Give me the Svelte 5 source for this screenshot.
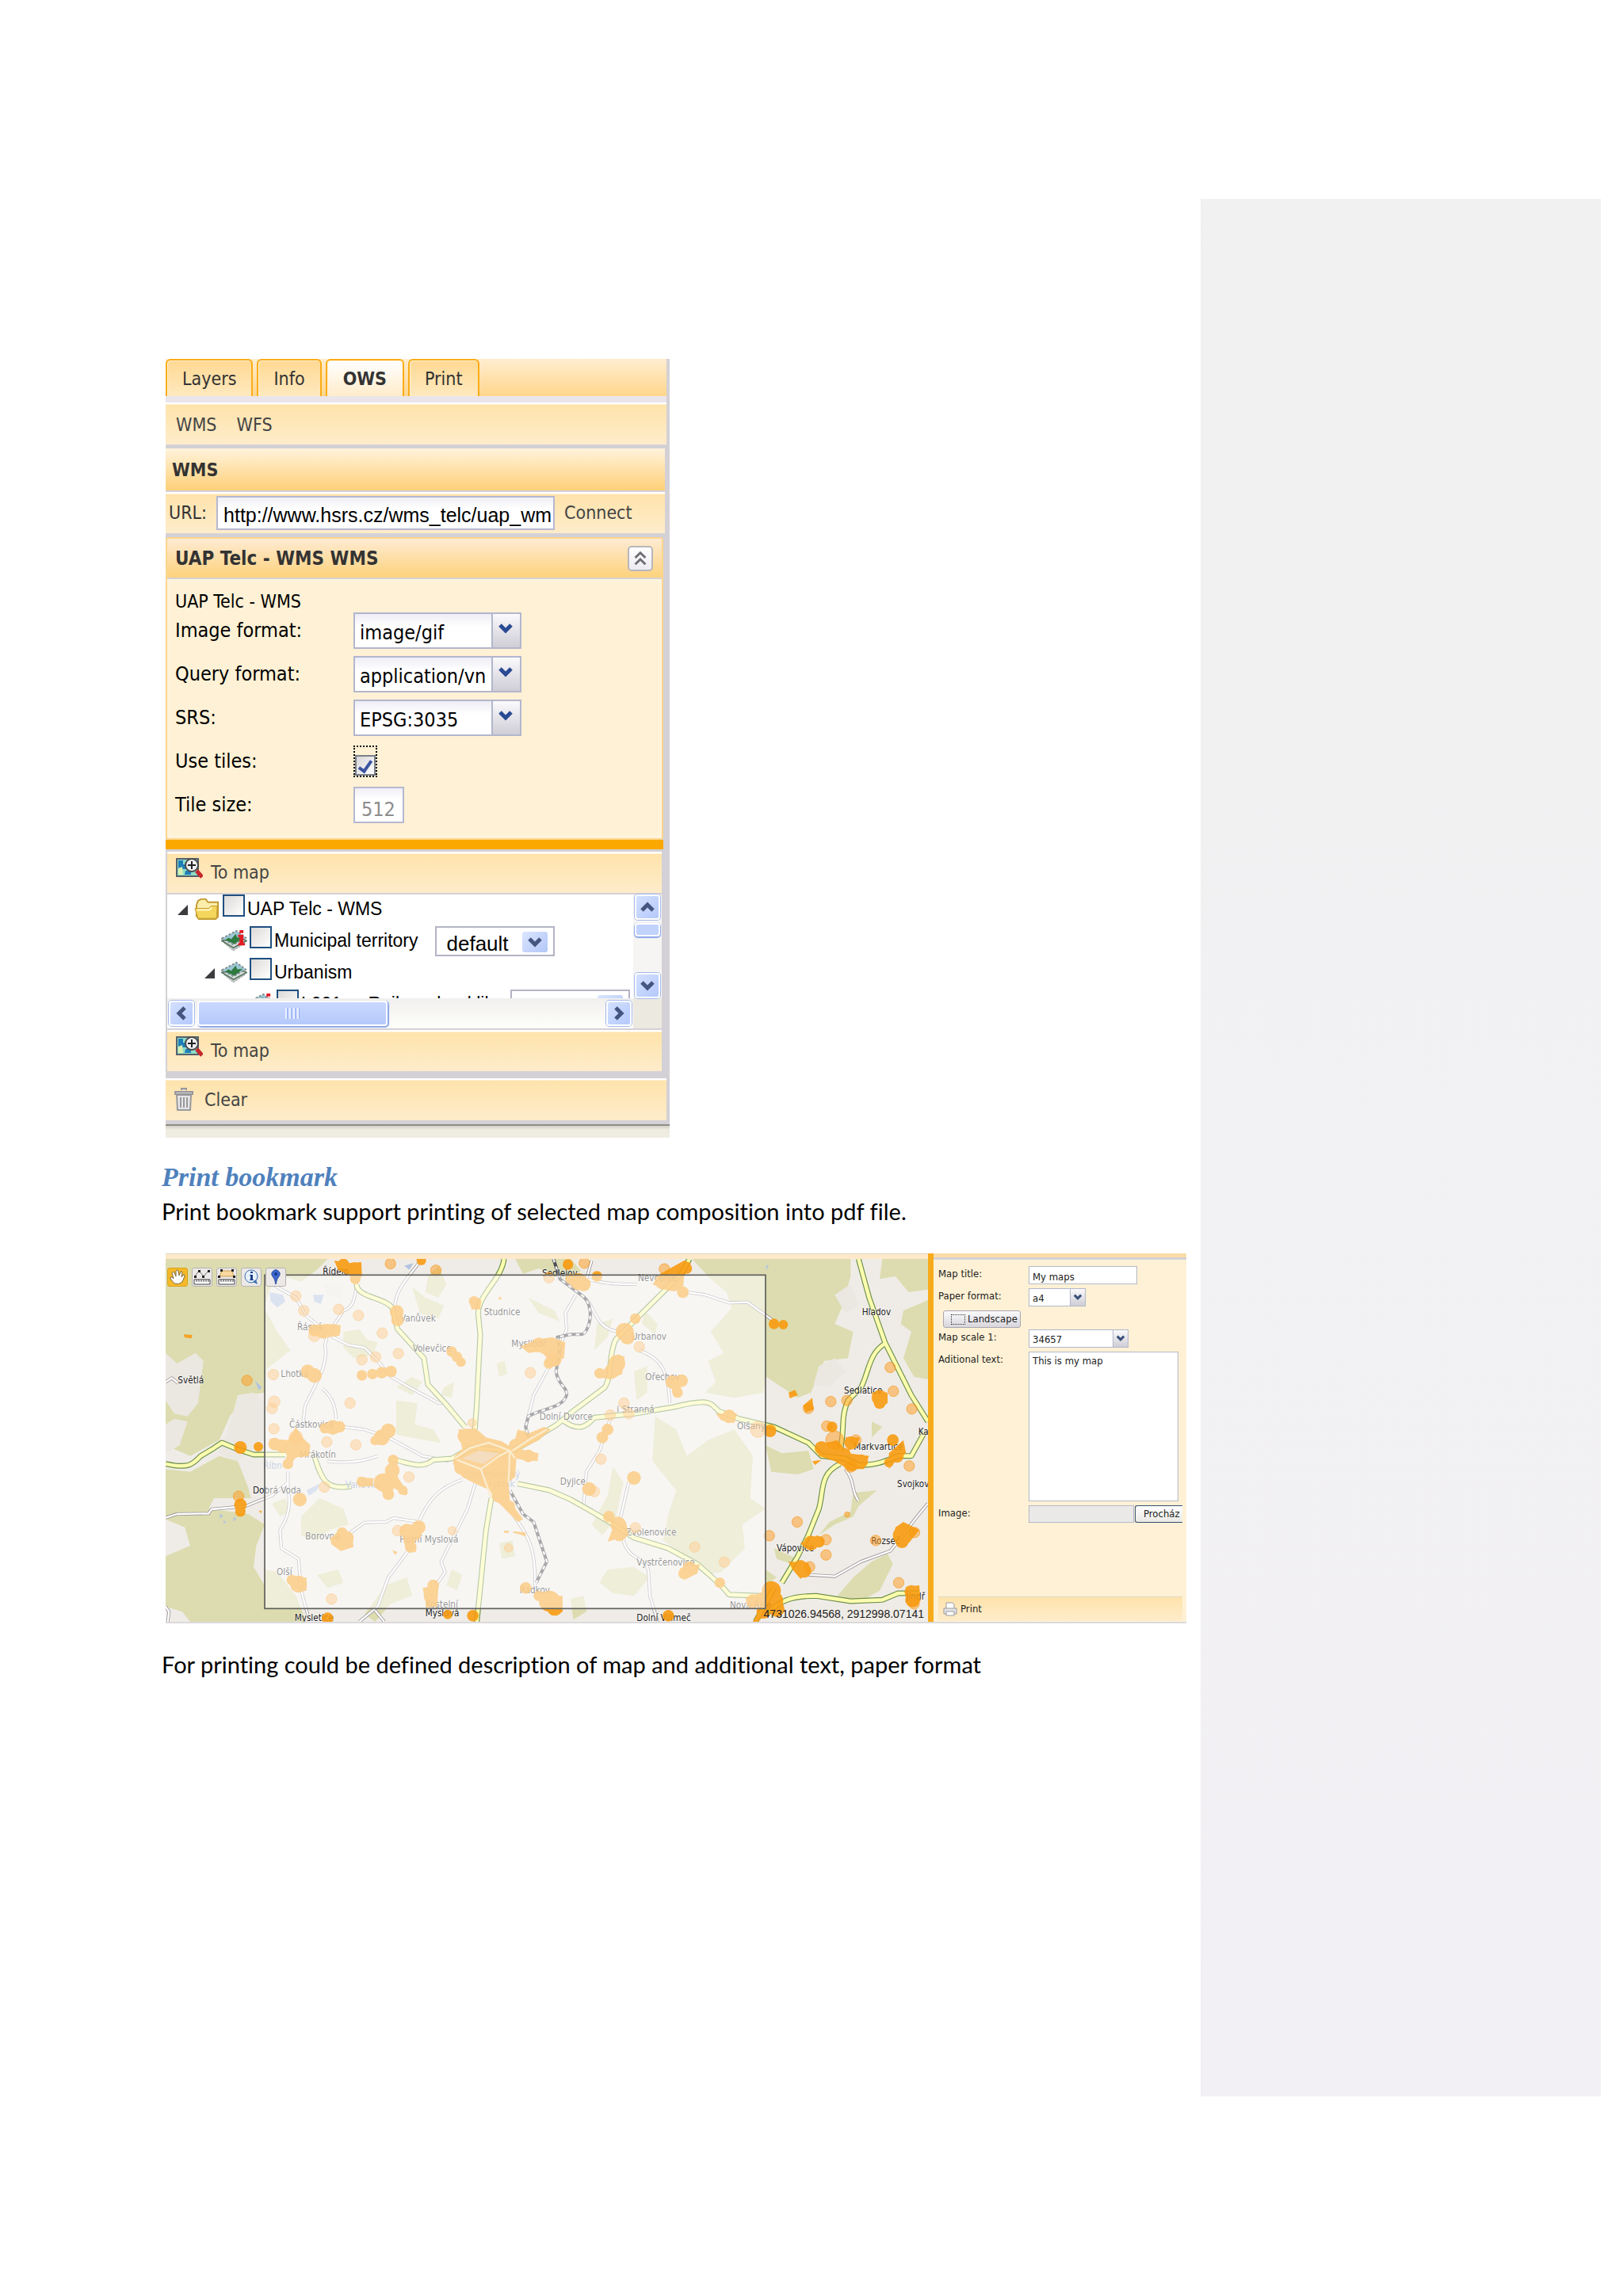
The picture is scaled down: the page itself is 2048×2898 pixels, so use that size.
<script lang="ts">
  type Blob = [number, number, number]

  let url = $state('http://www.hsrs.cz/wms_telc/uap_wm')
  let useTiles = $state(true)
  let mapTitle = $state('My maps')
  let extraText = $state('This is my map')

  const tabs = ['Layers', 'Info', 'OWS', 'Print']
  let activeTab = $state('OWS')

  const formats = [
    { id: 'image-format', label: 'Image format:', value: 'image/gif' },
    { id: 'query-format', label: 'Query format:', value: 'application/vn' },
    { id: 'srs', label: 'SRS:', value: 'EPSG:3035' },
  ]

  const tree = [
    { level: 0, name: 'UAP Telc - WMS', icon: 'folder', open: true, style: false },
    { level: 1, name: 'Municipal territory', icon: 'info', open: false, style: true },
    { level: 1, name: 'Urbanism', icon: 'layer', open: true, style: false },
    { level: 2, name: 'L001a - Railway land lik', icon: 'info', open: false, style: true },
  ]

  const tools = ['Pan', 'Measure line', 'Measure area', 'Info', 'Position']

  const forests = [
    'M27 54H640L600 95 540 140 470 120 420 170 400 240 450 330 500 400 410 470 402 560 330 570 270 650 230 740 120 800 27 760Z',
    'M27 850 120 860 230 800 300 820 340 920 350 960 210 960 190 1000 340 1020 402 1060 370 1140 360 1220 402 1290V1428H120L90 1390 27 1370V1180L120 1140 100 1070 27 1040Z',
    'M402 1230 450 1240 520 1330 560 1428H402Z',
    'M900 590 980 600 970 680 1040 700 1070 750 1010 740 900 720Z',
    'M540 1030 610 960 700 1000 720 1060 650 1080 600 1120 540 1100Z',
    'M1020 120 1060 80 1090 150 1060 200 1010 180Z',
    'M900 540 960 500 1000 520 960 570Z',
    'M860 1290 940 1260 960 1330 880 1360 820 1428 780 1400Z',
    'M700 330 760 320 790 360 830 370 810 420 740 430 700 390Z',
    'M960 160 1010 200 1080 230 1060 280 990 260Z',
    'M1080 540 1120 520 1110 580 1070 570Z',
    'M430 980 480 960 500 1010 460 1030ZM600 1250 680 1230 700 1280 640 1300ZM1280 450 1310 440 1320 490 1290 500Z',
    'M1110 1230 1150 1250 1130 1310 1090 1290ZM1290 1130 1340 1120 1350 1180 1300 1190Z',
    'M1350 54H1560L1600 100 1540 130 1440 90 1380 110Z',
    'M1400 200 1500 250 1520 290 1440 260Z',
    'M1660 300 1720 280 1700 350 1650 400Z',
    'M1800 480 1850 460 1850 560 1810 590ZM1840 250 1890 300 1880 340 1830 300Z',
    'M2020 54H2620V120L2590 230 2560 300 2630 330 2610 430 2520 440 2470 560 2420 580 2300 500 2290 560 2180 580 2070 560 2110 520 2080 440 2140 410 2090 330 2170 240 2150 180 2090 130Z',
    'M1880 650 1960 700 2000 800 2080 740 2180 700 2250 800 2240 960 2298 1000 2210 1060 2220 1150 2130 1240 2070 1250 2000 1180 1910 1120 1930 1020 1960 930 1870 820Z',
    'M1700 950 1720 840 1760 900 1730 1040 1680 1100 1640 1060Z',
    'M1700 1230 1800 1220 1860 1260 1800 1330 1720 1320 1670 1280Z',
    'M1560 1340 1610 1330 1620 1390 1570 1420Z',
    'M2820 250 2913 210V510L2860 500 2820 430 2850 330 2810 300Z',
    'M2740 54H2913V170L2840 180 2790 120 2730 130Z',
    'M2298 760 2360 790 2460 780 2480 850 2420 870 2320 860Z',
    'M2630 1260 2700 1200 2760 1170 2780 1210 2730 1310 2660 1350 2570 1330Z',
    'M2630 940 2720 930 2650 990 2630 1030 2560 1060 2500 1100 2540 1050 2620 1010Z',
    'M2330 1150 2420 1190 2400 1210 2340 1190Z',
    'M2700 670 2740 690 2700 730Z',
    'M2298 1230 2340 1260 2298 1290Z',
  ]

  const clearings = [
    'M27 410 70 450 140 410 170 440 150 600 110 650 60 640 27 590Z',
    'M300 570 360 560 402 600V740L330 800 300 820 230 790 270 680Z',
    'M60 660 110 670 80 760 27 790V680Z',
    'M620 140 700 160 690 200 640 190Z',
    'M2560 190 2620 150 2650 230 2600 260ZM2500 460 2560 430 2600 480 2540 540 2480 530Z',
  ]

  const lakes = [
    'M420 180 470 190 480 215 450 238 425 215Z',
    'M585 190 625 190 615 225 590 215Z',
    'M365 515 392 540 380 552Z',
    'M560 930 610 905 600 930 570 950Z',
    'M232 1018 245 1030 232 1035ZM245 1045 258 1050 248 1056ZM285 1030 295 1040 283 1048Z',
    'M2300 80 2310 75 2300 100Z',
    'M930 80 965 70 950 95Z',
  ]

  const minorRoads = [
    'M750 140C745 220 730 240 700 250L640 340 630 380C640 440 620 480 595 530L555 610 545 690',
    'M430 150 520 200 560 270 660 350 720 380 780 390 830 440 880 500 950 540 1060 600 1085 600',
    'M985 70C940 130 900 170 895 230',
    'M27 1034 70 1020 190 1018 200 1002 330 990 430 950 490 900',
    'M490 860V920C500 980 495 1030 460 1080L465 1150 530 1190 535 1250 545 1330 565 1400',
    'M700 690 780 700 870 730 1000 800 1100 820',
    'M640 820C720 830 780 820 830 800',
    'M620 545C650 570 670 600 672 660',
    'M1150 890C1060 920 1020 970 985 1050L890 1035 860 1050 780 1052 720 1095',
    'M1200 900 1170 1000 1120 1100 1070 1200 1085 1240 1050 1290',
    'M960 1140 870 1260 830 1370 760 1428M820 1385 855 1428',
    'M1480 460 1420 570 1390 690',
    'M1580 190 1540 260 1545 320 1500 440 1480 460',
    'M1600 190C1660 230 1640 310 1740 330',
    'M1640 60 1620 130C1700 150 1740 150 1810 150',
    'M2000 180 2070 190 2160 220 2230 218 2330 290',
    'M1820 400C1900 430 1930 470 1935 600',
    'M1720 630 1670 780 1620 860 1610 980',
    'M1780 900 1750 1030M1760 1120C1780 1200 1850 1180 1855 1240L1860 1330 1890 1428',
    'M1340 1020C1400 1100 1430 1150 1425 1300',
    'M2913 980C2870 1030 2840 1070 2820 1100L2770 1160 2660 1200 2560 1256 2460 1250',
    'M2600 850C2640 900 2620 930 2650 970',
    'M27 520 50 505 75 525',
    'M27 1370 40 1390 35 1428',
  ]

  const mainRoads = [
    'M27 830C120 850 130 830 160 800L210 770 240 750 300 775 360 795H480',
    'M750 150C750 200 860 200 885 240L905 320 1005 430 1020 530 1085 600 1160 690',
    'M1308 54C1300 130 1210 190 1210 260L1218 340 1205 600 1198 700',
    'M590 800C620 900 640 930 730 915',
    'M880 810C950 830 1000 850 1040 815L1110 810 1180 770 1330 780',
    'M1260 960 1240 1080 1230 1180 1205 1428',
    'M2010 54 1980 110 1920 170 1810 280 1730 360C1700 430 1720 490 1690 540L1570 630 1510 680 1380 760 1340 780',
    'M1530 665C1590 710 1620 690 1650 655L1800 640 1950 615C2090 580 2090 600 2120 630L2200 660 2330 690 2460 750 2510 800 2600 810 2650 835C2720 835 2750 820 2800 800L2850 800 2900 710',
    'M2650 54 2690 200 2750 370 2850 570 2913 670',
    'M2750 375C2690 410 2690 480 2660 540L2610 590C2580 660 2600 700 2580 780',
    'M2580 830C2500 870 2520 930 2500 1000L2460 1100 2420 1180 2360 1280',
    'M1360 905 1480 930 1560 965 1640 1010 1740 1070 1800 1110 1930 1150 2040 1210 2130 1290 2160 1325 2280 1330',
    'M2300 1400C2350 1350 2390 1330 2490 1330L2620 1350 2740 1345 2800 1320H2880',
    'M2260 1428 2330 1300',
  ]

  const railway =
    'M1495 54 1520 130 1600 190C1660 230 1630 340 1600 340L1560 340 1510 350 1520 400 1505 480C1510 530 1550 540 1545 570 1530 620 1450 620 1400 650L1390 690 1400 730M1330 930 1380 1020 1420 1050 1450 1140 1470 1200 1430 1280'

  // built-up areas with a ragged outline
  const builtUp = [
    'M665 60 720 70 768 66 770 120 745 150 728 120 680 95Z',
    'M572 305 640 300 690 305 685 345 640 350 580 345Z',
    'M1135 700 1200 695 1240 730 1300 745 1340 770 1360 700 1400 715 1460 690 1485 700 1440 740 1370 775 1438 790 1435 820 1380 815 1355 810 1350 880 1325 900 1330 970 1380 1040 1360 1050 1310 1000 1270 960 1255 930 1200 905 1150 880 1115 830 1120 800 1150 775Z',
    'M420 735 490 740 520 690 545 730 575 760 570 800 520 805 490 850 470 840 490 790 430 775Z',
    'M820 880 870 860 875 800 905 815 905 880 945 940 935 950 890 920 880 965 850 940 815 915Z',
    'M755 880 815 885 810 915 760 915Z',
    'M650 1110 690 1090 735 1105 738 1145 690 1160 655 1135Z',
    'M920 1080 1000 1055 1010 1080 970 1110 975 1165 935 1150Z',
    'M1370 385 1430 360 1490 350 1540 370 1535 430 1500 440 1440 405 1400 410Z',
    'M1870 150 1900 110 1990 60 2015 70 1990 120 1985 170 1930 175Z',
    'M1705 440 1740 415 1765 425 1755 490 1710 510 1655 500 1660 470 1700 475Z',
    'M1400 740 1450 700 1475 705 1430 745Z',
    'M1940 500 1985 500 1975 560 1945 560Z',
    'M1690 1020 1770 1050 1780 1100 1700 1125 1725 1060Z',
    'M1430 1325 1530 1330 1530 1390 1490 1405 1460 1370Z',
    'M2110 640 2190 640 2180 675 2130 665Z',
    'M1975 1225 2050 1210 2040 1245 1990 1270Z',
    'M2220 1340 2300 1310 2300 1280 2345 1285 2350 1350 2375 1390 2310 1385 2270 1428 2250 1428 2280 1370Z',
    'M2490 760 2570 740 2610 790 2690 800 2670 850 2610 850 2560 820 2500 800Z',
    'M2700 560 2760 560 2760 600 2730 620 2705 590Z',
    'M2765 790 2820 740 2830 790 2790 820 2765 850Z',
    'M2385 560 2410 550 2420 570 2390 582Z',
    'M2440 610 2475 580 2480 625 2450 635Z',
    'M2475 820 2510 815 2485 835Z',
    'M2600 730 2655 730 2640 770 2610 780Z',
    'M2385 1200 2460 1205 2470 1240 2430 1265 2400 1230Z',
    'M2430 1130 2495 1100 2505 1140 2450 1150Z',
    'M2790 1070 2820 1050 2880 1080 2840 1130 2800 1145 2780 1110Z',
    'M2830 1295 2880 1290 2885 1350 2840 1365 2830 1330Z',
    'M1000 1300 1060 1290 1055 1370 1015 1375Z',
    'M500 1270 560 1260 560 1310 530 1315Z',
    'M1175 200 1190 215 1205 198 1222 210 1218 245 1185 245Z',
    'M1390 1105 1340 1090 1345 1085 1390 1090ZM885 1155 905 1165 895 1175ZM1308 1083h18v8h-18ZM380 1005l12 5-5 8ZM1290 195l10 10-12 4Z',
    'M95 340 128 342 125 355 100 352Z',
  ]

  // settlement clusters, drawn as overlapping circles
  const clusters: Blob[] = [
    [700, 75, 22], [740, 95, 28], [745, 130, 20], [995, 60, 18], [902, 255, 26], [905, 285, 24],
    [590, 325, 22], [625, 330, 26], [665, 325, 24], [565, 480, 26], [590, 495, 28], [770, 495, 20],
    [810, 490, 20], [845, 485, 22], [880, 480, 22], [1110, 405, 20], [1130, 425, 20], [1145, 445, 18],
    [630, 695, 20], [660, 692, 28], [685, 690, 22], [440, 755, 24], [470, 765, 24], [510, 780, 30],
    [540, 775, 30], [490, 830, 20], [870, 705, 28], [845, 730, 30], [820, 742, 18], [310, 768, 24],
    [378, 765, 18], [310, 985, 24], [310, 1010, 20], [535, 965, 26], [770, 898, 20], [850, 900, 34],
    [885, 855, 28], [888, 815, 20], [880, 895, 30], [925, 930, 18], [870, 945, 22], [690, 1120, 32],
    [715, 1110, 24], [695, 1090, 20], [940, 1085, 28], [965, 1090, 32], [985, 1070, 26], [955, 1145, 22],
    [1030, 1330, 26], [1040, 1290, 22], [1035, 1350, 22], [530, 1285, 32], [505, 1270, 20], [1160, 725, 28],
    [1290, 950, 28], [1330, 990, 20], [1350, 760, 24], [1400, 800, 24], [1380, 725, 20], [1145, 845, 26],
    [1195, 215, 20], [1440, 380, 28], [1490, 400, 34], [1500, 435, 26], [1478, 450, 20], [1590, 140, 32],
    [1560, 130, 20], [1610, 150, 26], [1660, 120, 20], [1550, 75, 20], [1910, 140, 30], [1950, 140, 36],
    [1985, 180, 22], [2000, 90, 20], [1765, 330, 34], [1775, 350, 28], [1805, 280, 20], [1735, 450, 32],
    [1715, 480, 28], [1670, 487, 20], [1945, 520, 26], [1980, 515, 24], [1965, 560, 20], [2160, 650, 26],
    [1700, 700, 22], [1680, 730, 22], [1630, 925, 26], [1800, 883, 26], [1740, 1060, 30], [1745, 1095, 28],
    [1705, 1030, 22], [2010, 1225, 26], [1990, 1245, 22], [2125, 1280, 20], [2250, 1350, 26], [1480, 1350, 40],
    [1500, 1375, 30], [1390, 1300, 22], [1440, 1330, 20], [2320, 1310, 36], [2325, 1350, 40], [2290, 1390, 26],
    [2340, 1380, 30], [1930, 1405, 22], [640, 1415, 22], [1190, 1405, 22], [1095, 1400, 18], [2330, 300, 20],
    [2365, 303, 18], [2730, 580, 30], [2730, 600, 22], [2315, 705, 24], [2590, 800, 32], [2625, 830, 28],
    [2660, 820, 26], [2510, 770, 26], [2540, 770, 22], [2550, 690, 20], [2620, 750, 24], [2780, 740, 22],
    [2795, 800, 26], [2765, 825, 18], [2470, 1130, 28], [2500, 1125, 22], [2430, 1220, 26], [2445, 1235, 26],
    [2810, 1100, 30], [2830, 1080, 22], [2815, 1125, 24], [2850, 1315, 26], [2855, 1345, 28],
  ]

  const dots: Blob[] = [
    [878, 72, 20], [1050, 97, 20], [520, 195, 20], [550, 250, 20], [682, 245, 20], [757, 268, 20],
    [847, 335, 20], [908, 412, 20], [822, 425, 20], [770, 436, 20], [435, 492, 20], [335, 514, 20],
    [438, 595, 22], [430, 620, 20], [725, 600, 20], [437, 697, 20], [637, 747, 20], [747, 758, 20],
    [303, 953, 20], [628, 918, 20], [948, 880, 20], [905, 1083, 20], [655, 1342, 20], [1408, 485, 20],
    [1112, 1083, 16], [1325, 1148, 16], [1187, 675, 16], [590, 345, 22], [520, 730, 26], [1612, 70, 20],
    [1478, 125, 20], [1915, 92, 20], [1820, 387, 20], [1762, 600, 20], [1780, 640, 20], [1710, 645, 20],
    [1675, 812, 20], [1650, 935, 20], [1805, 1072, 20], [2030, 1145, 20], [2142, 1202, 20], [2270, 700, 30],
    [2770, 465, 20], [2545, 594, 20], [2606, 590, 20], [2782, 555, 20], [2852, 622, 20], [2460, 620, 20],
    [2530, 687, 20], [2560, 740, 34], [2640, 740, 20], [2842, 838, 20], [2418, 1050, 20], [2527, 1117, 20],
    [2527, 1175, 20], [2312, 1102, 20], [2465, 1220, 20], [2715, 1120, 20], [2862, 1090, 20], [2802, 1280, 20],
    [2860, 1360, 20], [2620, 840, 22], [1490, 435, 24], [2607, 1022, 10],
  ]

  const places: [number, number, string][] = [
    [622, 115, 'Řídelo'], [1232, 266, 'Studnice'], [915, 292, 'Vanůvek'], [525, 324, 'Řásná'],
    [962, 405, 'Volevčice'], [1336, 387, 'Myslibdř'], [463, 500, 'Lhotka'], [73, 526, 'Světlá'],
    [495, 693, 'Částkovice'], [535, 807, 'Mrákotín'], [357, 943, 'Dobrá Voda'], [556, 1115, 'Borovná'],
    [913, 1127, 'Horní Myslová'], [447, 1251, 'Olší'], [1010, 1374, 'Kostelní'], [1010, 1408, 'Myslová'],
    [515, 1424, 'Mysletice'], [1367, 1319, 'Radkov'], [1452, 119, 'Sedlejov'], [1815, 139, 'Nevcehle'],
    [1790, 360, 'Urbanov'], [1843, 512, 'Ořechov'], [1735, 636, 'i Stranná'], [1442, 664, 'Dolní Dvorce'],
    [2190, 699, 'Olšany'], [1520, 909, 'Dyjice'], [1770, 1101, 'Zvolenovice'], [1810, 1215, 'Vystrčenovice'],
    [2163, 1376, 'Nová Říše'], [1810, 1426, 'Dolní Vilímeč'], [2663, 266, 'Hladov'], [2595, 563, 'Sedlatice'],
    [2632, 778, 'Markvartice'], [2876, 720, 'Ka'], [2796, 917, 'Svojkov'], [2698, 1133, 'Rozseč'],
    [2340, 1160, 'Vápovice'], [2830, 1344, 'Jindř'],
  ]

  const waterNames: [number, number, string][] = [
    [397, 850, 'Říbn'], [707, 920, 'Vanůvka'], [1155, 883, 'Staroměstský'], [1250, 918, 'rybník'],
    [1155, 780, 'Telč'],
  ]
</script>

{#snippet chevron(dir: string, color: string)}
  <svg class="chevron {dir}" viewBox="0 0 20 20" aria-hidden="true">
    <path d="M3 6 10 13 17 6" fill="none" stroke={color} stroke-width="5" />
  </svg>
{/snippet}

{#snippet magnifier()}
  <svg class="bar-icon" viewBox="0 0 34 30" aria-hidden="true">
    <path d="M1 2H28V24H1Z" fill="#8fdcc8" stroke="#55606a" stroke-width="2" />
    <path d="M3 4H9V9H13V15H8V19H3ZM12 17H19V22H11Z" fill="#1f7fb8" />
    <path d="M3 14 8 12 9 22H3Z" fill="#d8efb0" />
    <circle cx="20" cy="10" r="8" fill="#eef0f2" stroke="#4a4a4a" stroke-width="2" />
    <path d="M20 5V15M15 10H25" stroke="#222" stroke-width="2" />
    <path d="M26 17 33 25" stroke="#c5282c" stroke-width="5" />
  </svg>
{/snippet}

{#snippet treeIcon(kind: string)}
  {#if kind === 'folder'}
    <svg class="tree-icon" viewBox="0 0 34 28" aria-hidden="true">
      <path d="M3 9 5 3 9 1H15L18 5H31V24L28 27H6L3 23Z" fill="#fbeeac" stroke="#c39a2e" stroke-width="2" />
      <path d="M1 13H19L22 10H30L29 26H5Z" fill="#f5d65c" stroke="#c39a2e" stroke-width="1" />
      <path d="M4 15H20L23 12" fill="none" stroke="#fff7c8" stroke-width="2" />
    </svg>
  {:else}
    <svg class="tree-icon" viewBox="0 0 34 28" aria-hidden="true">
      <path d="M4 17 16 27 31 17 20 11Z" fill="#c3c7c7" stroke="#868e90" stroke-width="1" stroke-dasharray="2 2" />
      <path d="M1 14 16 23 33 14 22 8Z" fill="#dfe2e2" stroke="#5c7a66" stroke-width="2" />
      <path d="M1 11 20 1 32 10 16 19Z" fill="#9cc8d6" stroke="#84908f" stroke-width="2" stroke-dasharray="3 2" />
      <path d="M5 13 10 10 13 12 19 5 21 10 28 9 23 14 17 18 13 16Z" fill="#2f7a3f" />
      {#if kind === 'info'}
        <path d="M24 0H29V4H24ZM22 6H29V17H31V20H22V17H24V9H22Z" fill="#e31b23" />
      {/if}
    </svg>
  {/if}
{/snippet}

<div class="page">
  <main class="doc">
    <section class="panel" aria-label="OWS bookmark">
      <div class="tabs" role="tablist">
        {#each tabs as tab}
          <button
            class="tab"
            class:active={tab === activeTab}
            role="tab"
            aria-selected={tab === activeTab}
            onclick={() => (activeTab = tab)}>{tab}</button
          >
        {/each}
      </div>

      <div class="toolbar services">
        <button>WMS</button>
        <button>WFS</button>
      </div>

      <div class="service">
        <h3 class="title">WMS</h3>
        <div class="toolbar url-row">
          <label for="url">URL:</label>
          <input id="url" class="field url" type="text" bind:value={url} />
          <button>Connect</button>
        </div>

        <div class="group">
          <div class="group-head">
            <h3>UAP Telc - WMS WMS</h3>
            <button class="collapse" aria-label="Collapse">
              <svg viewBox="0 0 20 24" aria-hidden="true">
                <path d="M3 11 10 4 17 11M3 20 10 13 17 20" fill="none" stroke="#6c6c72" stroke-width="3" />
              </svg>
            </button>
          </div>
          <div class="group-body">
            <p>UAP Telc - WMS</p>
            {#each formats as f}
              <div class="row">
                <label for={f.id}>{f.label}</label>
                <div class="combo">
                  <select id={f.id}><option>{f.value}</option></select>
                  <span class="trigger">{@render chevron('down', '#2a4a94')}</span>
                </div>
              </div>
            {/each}
            <div class="row">
              <label for="tiles">Use tiles:</label>
              <span class="focus-box">
                <input id="tiles" class="tick" type="checkbox" bind:checked={useTiles} />
              </span>
            </div>
            <div class="row">
              <label for="tile-size">Tile size:</label>
              <input id="tile-size" class="field tile-size" type="text" value="512" disabled />
            </div>
          </div>
        </div>

        <div class="splitter"></div>

        <div class="layers">
          <div class="toolbar map-bar">
            <button>{@render magnifier()}To map</button>
          </div>
          <div class="tree-area">
            <ul class="tree">
              {#each tree as node, i}
                <li class="level-{node.level}">
                  <span class="twisty" class:open={node.open}></span>
                  {@render treeIcon(node.icon)}
                  <input id="node-{i}" class="node-check" type="checkbox" />
                  <label for="node-{i}">{node.name}</label>
                  {#if node.style}
                    <span class="style-pick">
                      <select aria-label="Style of {node.name}"><option>default</option></select>
                      <span class="style-arrow">{@render chevron('down', '#44567f')}</span>
                    </span>
                  {/if}
                </li>
              {/each}
            </ul>
            <div class="vscroll">
              <button aria-label="Scroll up">{@render chevron('up', '#44567f')}</button>
              <span class="vthumb"></span>
              <button aria-label="Scroll down">{@render chevron('down', '#44567f')}</button>
            </div>
            <div class="hscroll">
              <button aria-label="Scroll left">{@render chevron('left', '#44567f')}</button>
              <span class="hthumb"><i></i><i></i><i></i><i></i></span>
              <button aria-label="Scroll right">{@render chevron('right', '#44567f')}</button>
            </div>
          </div>
          <div class="toolbar map-bar">
            <button>{@render magnifier()}To map</button>
          </div>
        </div>
      </div>

      <div class="toolbar clear-bar">
        <button>
          <svg class="bin" viewBox="0 0 26 30" aria-hidden="true">
            <path d="M10 3V1H16V3M2 5H24V8H2Z" fill="#d6d6d8" stroke="#98989c" stroke-width="2" />
            <path d="M4 9H22L21 28H5Z" fill="#e6e6e7" stroke="#9a9a9e" stroke-width="2" />
            <path d="M9 12V25M13 12V25M17 12V25" stroke="#9a9a9e" stroke-width="2" />
          </svg>
          Clear
        </button>
      </div>
      <div class="status"></div>
    </section>

    <h2>Print bookmark</h2>
    <p class="text">Print bookmark support printing of selected map composition into pdf file.</p>

    <section class="viewer" aria-label="Print composition">
      <div class="map">
        <svg class="canvas" viewBox="27 54 2886 1374" role="img" aria-label="Map of Telč">
          <rect x="27" y="54" width="2886" height="1374" fill="#efece7" />
          {#each forests as d}<path {d} fill="#dcdcb0" />{/each}
          {#each clearings as d}<path {d} fill="#ebe8e2" />{/each}
          {#each lakes as d}<path {d} fill="#b3c3df" />{/each}

          <g fill="none" stroke-linejoin="round">
            {#each minorRoads as d}<path {d} stroke="#9b9598" stroke-width="12" />{/each}
            {#each minorRoads as d}<path {d} stroke="#fff" stroke-width="7" />{/each}
            {#each mainRoads as d}<path {d} stroke="#6f8f4c" stroke-width="21" />{/each}
            {#each mainRoads as d}<path {d} stroke="#fbfdae" stroke-width="14" />{/each}
            <path d={railway} stroke="#4c4c52" stroke-width="12" />
            <path d={railway} stroke="#f4f4f4" stroke-width="7" stroke-dasharray="14 16" />
          </g>

          <g class="water">
            {#each waterNames as [x, y, name]}<text {x} {y}>{name}</text>{/each}
          </g>
          <g class="places">
            {#each places as [x, y, name]}<text {x} {y}>{name}</text>{/each}
          </g>

          {#each dots as [cx, cy, r]}
            <circle {cx} {cy} {r} fill="#ff9a1e" fill-opacity="0.5" stroke="#f59512" stroke-opacity="0.6" stroke-width="3" />
          {/each}
          <g fill="#f99a0c" opacity="0.88">
            {#each builtUp as d}<path {d} />{/each}
            {#each clusters as [cx, cy, r]}<circle {cx} {cy} {r} />{/each}
          </g>
          <g fill="none" stroke="#f7d79a" stroke-width="7">
            <path d="M1120 810 1180 770 1250 750 1330 780 1350 810M1130 815 1220 850 1290 800 1330 780M1220 850 1260 960M1330 780 1325 900M1340 780 1400 740 1470 700" />
          </g>
          <path d="M1150 810 1210 780 1290 790 1230 830Z" fill="#e8b878" />

          <rect x="402" y="115" width="1896" height="1263" fill="#fff" fill-opacity="0.52" />
          <rect x="402" y="115" width="1896" height="1263" fill="none" stroke="#5f5f5c" stroke-width="5" />
        </svg>

        <div class="map-tools">
          {#each tools as tool, i}
            <button class:selected={i === 0} aria-label={tool}>
              <svg viewBox="0 0 24 22" aria-hidden="true">
                {#if i === 0}
                  <path
                    d="M8 19 3 13Q2 10 5 11L7 13 5 6Q6 3 8 5L10 10 10 3Q12 1 13 3L14 9 16 4Q18 3 18 5L17 11 19 8Q22 8 21 10L18 17Q14 21 8 19Z"
                    fill="#fff"
                    stroke="#7d6a3a"
                    stroke-width="1"
                  />
                {:else if i === 1 || i === 2}
                  {#if i === 1}
                    <path d="M3 10 8 3 14 10 20 3" fill="none" stroke="#777" stroke-width="1" />
                    <path d="M2 9h3v3H2ZM7 2h3v3H7ZM12 9h3v3h-3ZM19 2h3v3h-3Z" fill="#222" />
                  {:else}
                    <path d="M6 3H19L21 10H3Z" fill="#fbd9a0" stroke="#c99a52" stroke-width="1" />
                    <path d="M4 1h3v3H4ZM18 1h3v3h-3ZM1 9h3v3H1ZM20 9h3v3h-3Z" fill="#222" />
                  {/if}
                  <path d="M2 14H22V20H2Z" fill="#fff" stroke="#444" stroke-width="1" />
                  <path d="M5 14v3M8 14v3M11 14v3M14 14v3M17 14v3M20 14v3" stroke="#444" stroke-width="1" />
                {:else if i === 3}
                  <circle cx="12" cy="10" r="8" fill="#e6f1fc" stroke="#3d6fae" stroke-width="1" />
                  <path d="M14 17 20 20 18 14Z" fill="#3d6fae" />
                  <path d="M11 4H14V6H11ZM10 8H14V14H15V15H10V14H11V9H10Z" fill="#1c3f86" />
                {:else}
                  <path d="M12 20Q11 13 8 10A5 5 0 1 1 16 10Q13 13 12 20Z" fill="#3c68cf" stroke="#2a4a9c" stroke-width="1" />
                  <circle cx="12" cy="7" r="2" fill="#1d3a86" />
                {/if}
              </svg>
            </button>
          {/each}
        </div>
        <span class="coords">4731026.94568, 2912998.07141</span>
      </div>

      <form class="print-form">
        <div class="print-fields">
          <label for="map-title">Map title:</label>
          <input id="map-title" class="box map-title" type="text" bind:value={mapTitle} />

          <label for="paper">Paper format:</label>
          <div class="combo small paper">
            <select id="paper"><option>a4</option></select>
            <span class="trigger">{@render chevron('down', '#3a5078')}</span>
          </div>

          <button class="landscape" type="button"><span></span>Landscape</button>

          <label for="scale">Map scale 1:</label>
          <div class="combo small scale">
            <select id="scale"><option>34657</option></select>
            <span class="trigger">{@render chevron('down', '#3a5078')}</span>
          </div>

          <label for="extra">Aditional text:</label>
          <textarea id="extra" class="box" bind:value={extraText}></textarea>

          <label for="image">Image:</label>
          <div class="upload">
            <input id="image" class="box" type="text" readonly />
            <button type="button">Procház</button>
          </div>
        </div>
        <div class="print-bar">
          <button type="button">
            <svg viewBox="0 0 18 18" aria-hidden="true">
              <path d="M4 8V1H12L14 3V8" fill="#fff" stroke="#9a9a9e" />
              <path d="M1 8H17V15H1Z" fill="#e4e4e6" stroke="#9a9a9e" />
              <path d="M4 12H14V17H4Z" fill="#fff" stroke="#9a9a9e" />
            </svg>
            Print
          </button>
        </div>
      </form>
    </section>

    <p class="text closing">For printing could be defined description of map and additional text, paper format</p>
  </main>

  <aside class="comments" aria-label="Comments"></aside>
</div>

<style>
  :global(body) {
    margin: 0;
    background: #fff;
  }

  .page {
    --ui: 'DejaVu Sans Condensed', 'DejaVu Sans', sans-serif;
    --line: #d4d1d6;
    --bar: linear-gradient(#fff 0 2px, #fee3ab 3px, #feeccb);
    box-sizing: border-box;
    display: flex;
    min-height: 100vh;
    padding: 251px 28px 252px 204px;
  }

  .doc {
    flex: 1;
    min-width: 0;
    padding-top: 202px;
  }

  .comments {
    flex: 0 0 505px;
    background: linear-gradient(#f1f1f1, #f2f0f4);
  }

  button,
  input,
  select,
  textarea {
    box-sizing: border-box;
    margin: 0;
    border-radius: 0;
    font: inherit;
    color: inherit;
  }

  button {
    padding: 0;
    border: 0;
    background: none;
  }

  select {
    appearance: none;
    outline: 0;
  }

  svg {
    display: block;
  }

  .chevron {
    width: 20px;
    height: 20px;
  }

  .chevron.up {
    transform: rotate(180deg);
  }

  .chevron.left {
    transform: rotate(90deg);
  }

  .chevron.right {
    transform: rotate(-90deg);
  }

  /* OWS panel */
  .panel {
    box-sizing: border-box;
    max-width: 636px;
    margin-left: 5px;
    font: 23px/28px var(--ui);
    color: #333;
    background: var(--line);
  }

  .tabs {
    display: flex;
    align-items: flex-end;
    gap: 5px;
    margin-right: 4px;
    border-bottom: 8px solid #e9e5ea;
    background: linear-gradient(#ffedd0, #ffd68c);
  }

  .tab {
    height: 47px;
    padding: 0 19px;
    border: 2px solid #fbac17;
    border-bottom: 0;
    border-radius: 6px 6px 0 0;
    box-shadow: inset 1px 1px 0 #fff3d6;
    background: linear-gradient(#ffd993, #ffe9bf);
  }

  .tab.active {
    padding: 0 20px;
    font-weight: bold;
    background: linear-gradient(#fff, #ffecca);
  }

  .toolbar {
    display: flex;
    align-items: center;
    background: var(--bar);
  }

  .services {
    gap: 25px;
    height: 58px;
    box-sizing: border-box;
    margin-right: 4px;
    padding: 2px 0 0 13px;
    border-bottom: 5px solid var(--line);
    color: #444;
  }

  .service {
    margin-right: 6px;
  }

  h3 {
    margin: 0;
    font-size: 23px;
    font-weight: bold;
  }

  .title {
    padding: 13px 8px 12px;
    border-bottom: 2px solid var(--line);
    background: linear-gradient(#fff3dc, #fed078);
  }

  .url-row {
    height: 52px;
    padding-left: 4px;
    border-bottom: 5px solid var(--line);
  }

  .url-row button {
    margin-left: 12px;
    color: #444;
  }

  .field {
    height: 46px;
    padding: 10px 8px 0;
    border: 2px solid #b5b8d0;
    background: linear-gradient(#f0eff5, #fff 14px);
  }

  .url {
    flex: 0 1 427px;
    min-width: 0;
    height: 43px;
    margin-left: 12px;
    padding: 6px 0 0 7px;
    font-family: 'Liberation Sans', Arial, sans-serif;
    font-size: 25px;
    color: #000;
  }

  .group {
    margin-right: 2px;
    border: 2px solid #fdd58c;
    border-radius: 4px;
    overflow: hidden;
    background: #fef1d5;
  }

  .group-head {
    display: flex;
    align-items: center;
    justify-content: space-between;
    height: 49px;
    padding: 0 11px 0 10px;
    border-bottom: 2px solid var(--line);
    background: linear-gradient(#feebd2, #fdd27c);
  }

  .group-head h3 {
    font-size: 24px;
  }

  .collapse {
    padding: 3px 4px;
    border: 2px solid #b9b6bd;
    border-radius: 5px;
    background: linear-gradient(#fff, #ecebf0);
  }

  .collapse svg {
    width: 20px;
    height: 22px;
  }

  .group-body {
    padding: 14px 10px 10px;
    box-shadow: inset 0 0 6px #fff8ea;
    color: #000;
  }

  .group-body p {
    margin: 0;
  }

  .row {
    display: flex;
    align-items: center;
    height: 46px;
    margin-bottom: 9px;
    font-size: 25px;
  }

  .row label {
    flex: 0 0 225px;
  }

  .combo {
    display: flex;
    box-sizing: border-box;
    width: 212px;
    height: 46px;
    border: 2px solid #b3b6cc;
    background: linear-gradient(#eeedf6, #fff 16px);
  }

  .combo select {
    flex: 1;
    min-width: 0;
    padding: 6px 0 0 6px;
    border: 0;
    background: none;
    white-space: nowrap;
  }

  .trigger {
    box-sizing: border-box;
    width: 36px;
    padding: 8px 6px;
    border-left: 2px solid #b3b6cc;
    background: linear-gradient(#fbfafc, #cfcdd6);
    pointer-events: none;
  }

  .focus-box {
    box-sizing: border-box;
    width: 30px;
    height: 40px;
    padding-top: 10px;
    border: 2px dotted #000;
  }

  .tick {
    display: grid;
    place-items: center;
    appearance: none;
    width: 26px;
    height: 26px;
    border: 2px solid #7b7f88;
    background: linear-gradient(135deg, #d8d6d8, #fff);
  }

  .tick:checked::after {
    content: '';
    width: 6px;
    height: 14px;
    border: solid #3a54a0;
    border-width: 0 4px 4px 0;
    transform: rotate(35deg);
  }

  .tile-size {
    width: 64px;
    color: #8d8d8d;
  }

  .splitter {
    height: 12px;
    margin-right: 2px;
    border-bottom: 3px solid var(--line);
    background: #fba900;
  }

  .layers {
    padding: 0 4px 0 2px;
  }

  .map-bar {
    height: 52px;
  }

  .map-bar button {
    display: flex;
    align-items: center;
    padding-left: 11px;
    color: #444;
  }

  .bar-icon {
    width: 34px;
    height: 30px;
    margin: 0 10px 8px 0;
  }

  .tree-area {
    display: grid;
    grid-template-columns: 1fr 36px;
    border: solid var(--line);
    border-width: 2px 0;
    background: #ece9e0;
  }

  .tree {
    min-width: 0;
    height: 131px;
    margin: 0;
    padding: 0;
    overflow: hidden;
    list-style: none;
    font-family: 'Liberation Sans', Arial, sans-serif;
    font-size: 23px;
    color: #000;
    background: #fff;
  }

  .tree li {
    display: flex;
    align-items: flex-start;
    height: 40px;
    padding-left: 13px;
    white-space: nowrap;
  }

  .tree .level-1 {
    padding-left: 47px;
  }

  .tree .level-2 {
    padding-left: 81px;
  }

  .tree label {
    margin-left: 3px;
    line-height: 36px;
  }

  .twisty {
    flex: 0 0 21px;
    height: 26px;
  }

  .twisty.open::before {
    content: '';
    display: block;
    width: 13px;
    height: 13px;
    margin-top: 13px;
    background: #3c3c40;
    clip-path: polygon(100% 0, 100% 100%, 0 100%);
  }

  .tree-icon {
    flex: none;
    width: 33px;
    height: 29px;
    margin: 4px 3px 0 0;
  }

  .node-check {
    appearance: none;
    flex: none;
    width: 28px;
    height: 28px;
    border: 2px solid #1f4f80;
    background: linear-gradient(135deg, #dcdad8, #fff);
  }

  .style-pick {
    position: relative;
    flex: none;
    width: 151px;
    height: 38px;
    margin-left: 21px;
  }

  .style-pick select {
    width: 100%;
    height: 100%;
    padding: 6px 0 0 13px;
    border: 2px solid #b3b4c4;
    background: #fff;
    font-size: 26px;
  }

  .style-arrow {
    position: absolute;
    top: 7px;
    right: 9px;
    padding: 3px 6px;
    border-radius: 3px;
    background: linear-gradient(135deg, #dbe5ff, #b2c7f8);
    pointer-events: none;
  }

  .vscroll {
    display: flex;
    flex-direction: column;
    align-items: center;
    background: #f6f5f3;
  }

  .vscroll button,
  .hscroll button {
    display: grid;
    place-items: center;
    flex: none;
    width: 32px;
    height: 32px;
    border: 2px solid #fff;
    border-radius: 4px;
    box-shadow: 0 0 0 1px #a3b9ec;
    background: linear-gradient(135deg, #d3e0ff, #b4c9fb);
  }

  .vthumb {
    width: 28px;
    height: 13px;
    margin: 4px 0 auto;
    border: 2px solid #fff;
    border-radius: 4px;
    box-shadow: 0 1px 1px 1px #8aa6ea;
    background: #c1d2fd;
  }

  .hscroll {
    display: flex;
    align-items: center;
    gap: 4px;
    height: 38px;
    padding: 0 2px;
    background: linear-gradient(#f1f0ee, #fefefb);
  }

  .hthumb {
    box-sizing: border-box;
    display: flex;
    justify-content: center;
    align-items: center;
    gap: 2px;
    width: 240px;
    height: 32px;
    margin-right: auto;
    border: 2px solid #fff;
    border-radius: 4px;
    box-shadow: 1px 1px 1px 1px #8aa6ea;
    background: linear-gradient(#c9d8ff, #b5c9fa);
  }

  .hthumb i {
    width: 2px;
    height: 14px;
    border-right: 1px solid #8faaf0;
    background: #eef3ff;
  }

  .clear-bar {
    height: 53px;
    margin: 9px 4px 0 0;
  }

  .clear-bar button {
    display: flex;
    align-items: center;
    gap: 13px;
    padding-left: 10px;
    color: #444;
  }

  .bin {
    width: 26px;
    height: 30px;
  }

  .status {
    height: 15px;
    margin-top: 5px;
    border-top: 2px solid #8f8d88;
    background: linear-gradient(#d2d0c6, #efece2 5px);
  }

  /* Document text */
  h2 {
    margin: 31px 0 0;
    font: italic bold 34px/38px 'Liberation Serif', 'Times New Roman', serif;
    color: #4f81bd;
  }

  .text {
    margin: 6px 0 0;
    font: 29px/36px Lato, 'Open Sans', sans-serif;
    font-variant-ligatures: none;
    color: #000;
  }

  .closing {
    margin-top: 34px;
  }

  /* Print screen */
  .viewer {
    display: flex;
    max-width: 1288px;
    margin: 35px 0 0 5px;
    border-bottom: 2px solid #dcd9dc;
    background: #fef1d5;
  }

  .map {
    position: relative;
    flex: 1 1 962px;
    min-width: 0;
    padding-top: 6px;
    border-top: 1px solid #ddd4c2;
    background: #ffe9ca;
  }

  .canvas {
    width: 100%;
    font-family: var(--ui);
    font-size: 35px;
  }

  .places {
    fill: #1c1c1c;
    stroke: #fff;
    stroke-width: 4px;
    stroke-opacity: 0.6;
    paint-order: stroke;
  }

  .water {
    fill: #8fa3c6;
  }

  .map-tools {
    position: absolute;
    top: 17px;
    left: 2px;
    display: flex;
    gap: 5px;
  }

  .map-tools button {
    width: 26px;
    height: 24px;
    border: 1px solid #b7b3b0;
    border-radius: 3px;
    background: #ece9e8;
  }

  .map-tools .selected {
    border-color: #d9a31d;
    background: #f5b92a;
  }

  .map-tools svg {
    width: 24px;
    height: 22px;
  }

  .coords {
    position: absolute;
    right: 5px;
    bottom: 1px;
    font: 14px/18px 'Liberation Sans', Arial, sans-serif;
    color: #222;
  }

  .print-form {
    box-sizing: border-box;
    display: flex;
    flex-direction: column;
    flex: 0 0 326px;
    min-width: 0;
    padding: 0 5px 1px 6px;
    border-left: 7px solid #f7ab1b;
    font: 13px/16px var(--ui);
    color: #222;
    background: linear-gradient(#fbdca6 0 5px, var(--line) 5px 8px, #fef1d5 8px);
  }

  .print-fields {
    display: grid;
    grid-template-columns: 114px 1fr;
    row-gap: 5px;
    padding-top: 16px;
    overflow: hidden;
  }

  .print-fields label {
    padding-top: 2px;
  }

  .box {
    padding: 3px 4px 0;
    border: 1px solid #b5b8c8;
    background: #fff;
  }

  .map-title {
    width: 137px;
    height: 23px;
  }

  .small {
    height: 23px;
    border-width: 1px;
    background: #fff;
  }

  .small select {
    padding: 3px 0 0 4px;
  }

  .small .trigger {
    width: 19px;
    padding: 4px 3px;
    border-left-width: 1px;
  }

  .small .chevron {
    width: 12px;
    height: 12px;
  }

  .paper {
    width: 72px;
  }

  .scale {
    width: 126px;
  }

  .landscape {
    display: flex;
    grid-column: 1 / -1;
    align-items: center;
    gap: 3px;
    width: 98px;
    height: 22px;
    margin: 0 0 -3px 6px;
    padding-left: 9px;
    border: 1px solid #a9a6ae;
    border-radius: 3px;
    background: linear-gradient(#fbfafb, #d8d6dc);
  }

  .landscape span {
    box-sizing: border-box;
    width: 18px;
    height: 13px;
    border: 1px dotted #333;
  }

  textarea {
    width: 189px;
    height: 189px;
    resize: none;
  }

  .upload {
    display: flex;
    gap: 1px;
    min-width: 0;
  }

  .upload .box {
    flex: 0 0 133px;
    min-width: 0;
    height: 22px;
    background: #ebe9e8;
  }

  .upload button {
    flex: 1;
    height: 22px;
    padding-left: 10px;
    border: 1px solid #33506c;
    border-right: 0;
    border-radius: 3px 0 0 3px;
    background: linear-gradient(#fff, #ebe9e4);
    text-align: left;
    font-size: 13px;
  }

  .print-bar {
    margin-top: auto;
    padding: 6px;
    border-top: 1px solid #e3d8c4;
    background: linear-gradient(#fee3ab, #feeccb);
  }

  .print-bar button {
    display: flex;
    align-items: center;
    gap: 4px;
  }

  .print-bar svg {
    width: 18px;
    height: 18px;
  }
</style>
